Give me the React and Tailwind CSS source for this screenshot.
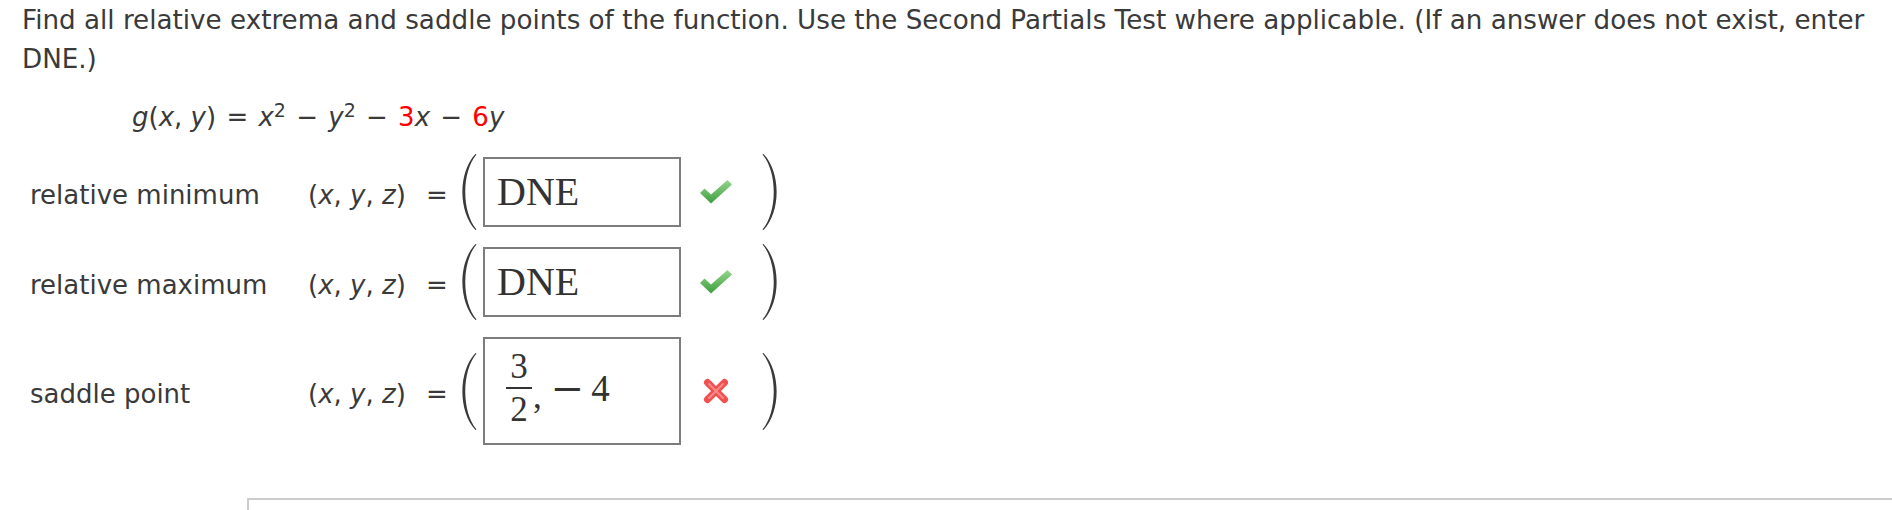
import React from 'react'

const Paren = ({ h = 76, right = false }) => (
  <svg
    width="16"
    height={h}
    viewBox={`0 0 16 76`}
    preserveAspectRatio="none"
    className={right ? '-scale-x-100 shrink-0' : 'shrink-0'}
  >
    <path
      d="M14.5 0 C-3 18 -3 58 14.5 76 L15.5 75.5 C0.5 58 0.5 18 15.5 0.5 Z"
      fill="#3a3a3a"
    />
  </svg>
)

const Check = () => (
  <svg width="32" height="24" viewBox="0 0 32 24">
    <defs>
      <linearGradient id="chk" x1="0" y1="0" x2="0" y2="1">
        <stop offset="0" stopColor="#93d68c" />
        <stop offset="1" stopColor="#3f9d3f" />
      </linearGradient>
    </defs>
    <polygon points="0,13 4.5,8.5 11,14.5 27.5,0 32,4.5 11,23.5" fill="url(#chk)" />
  </svg>
)

const Cross = () => (
  <svg width="26" height="26" viewBox="0 0 26 26">
    <g stroke="#f05050" strokeWidth="7" strokeLinecap="round">
      <line x1="4.5" y1="4.5" x2="21.5" y2="21.5" />
      <line x1="21.5" y1="4.5" x2="4.5" y2="21.5" />
    </g>
    <g stroke="#f88a8a" strokeWidth="2" strokeLinecap="round">
      <line x1="6" y1="6" x2="20" y2="20" />
      <line x1="20" y1="6" x2="6" y2="20" />
    </g>
  </svg>
)

const Row = ({ label, boxH, parenH, correct, children, className }) => (
  <div className={`flex items-center ${className}`}>
    <div className="flex mt-[5px] leading-[30px] whitespace-nowrap">
      <span className="w-[278px]">{label}</span>
      <span className="w-[118px]">
        (<i>x</i>, <i>y</i>, <i>z</i>)
      </span>
      <span className="w-[21px]">=</span>
    </div>
    <div className="ml-[14px] flex items-center">
      <Paren h={parenH} />
    </div>
    <div
      className="ml-[6px] w-[198px] border-2 border-[#7d7d7d] flex items-center px-[12px] text-[#333] font-['Liberation_Serif',serif]"
      style={{ height: boxH }}
    >
      {children}
    </div>
    <div className="ml-[19px] w-[32px] flex justify-center">
      {correct ? <Check /> : <Cross />}
    </div>
    <div className="ml-[30px] flex items-center">
      <Paren h={parenH} right />
    </div>
  </div>
)

export default function App() {
  return (
    <div className="relative w-[1892px] h-[510px] overflow-hidden bg-white text-[#3a3a3a] font-['DejaVu_Sans',Verdana,sans-serif] text-[26px]">
      {/* question */}
      <p className="pt-[1px] pl-[22px] pr-[10px] leading-[39px] text-[26.2px]">
        Find all relative extrema and saddle points of the function. Use the Second Partials Test where applicable. (If an answer does not exist, enter DNE.)
      </p>

      {/* function */}
      <div className="mt-[19px] pl-[132px] leading-[39px] whitespace-nowrap">
        <i>g</i>(<i>x</i>, <i>y</i>)<span className="px-[2px]"> = </span><i>x</i>
        <sup className="text-[19px]">2</sup><span className="px-[2px]"> − </span><i>y</i>
        <sup className="text-[19px]">2</sup><span className="px-[2px]"> − </span><span className="text-[#ff0000]">3</span>
        <i>x</i><span className="px-[2px]"> − </span><span className="text-[#ff0000]">6</span>
        <i>y</i>
      </div>

      {/* answers */}
      <div className="pl-[30px]">
        <Row label="relative minimum" boxH={70} parenH={76} correct className="mt-[17px] h-[76px]">
          <span className="text-[40px] leading-none">DNE</span>
        </Row>
        <Row label="relative maximum" boxH={70} parenH={76} correct className="mt-[14px] h-[76px]">
          <span className="text-[40px] leading-none">DNE</span>
        </Row>
        <Row label="saddle point" boxH={108} parenH={77} correct={false} className="mt-[17px] h-[108px]">
          <div className="flex items-center pb-[6px] text-[35px] leading-none">
            <div className="ml-[9px] flex flex-col items-center">
              <span>3</span>
              <span className="my-[3px] w-[26px] border-t-2 border-[#333]"></span>
              <span>2</span>
            </div>
            <span className="self-end mb-[13px] ml-[1px]">,</span>
            <span className="ml-[9px] text-[40px] font-['DejaVu_Serif',serif]">−</span>
            <span className="ml-[7px] text-[37px]">4</span>
          </div>
        </Row>
      </div>

      {/* next section frame */}
      <div className="mt-[53px] ml-[247px] -mr-[20px] h-[40px] border-t-2 border-l-2 border-[#cccccc]"></div>
    </div>
  )
}
